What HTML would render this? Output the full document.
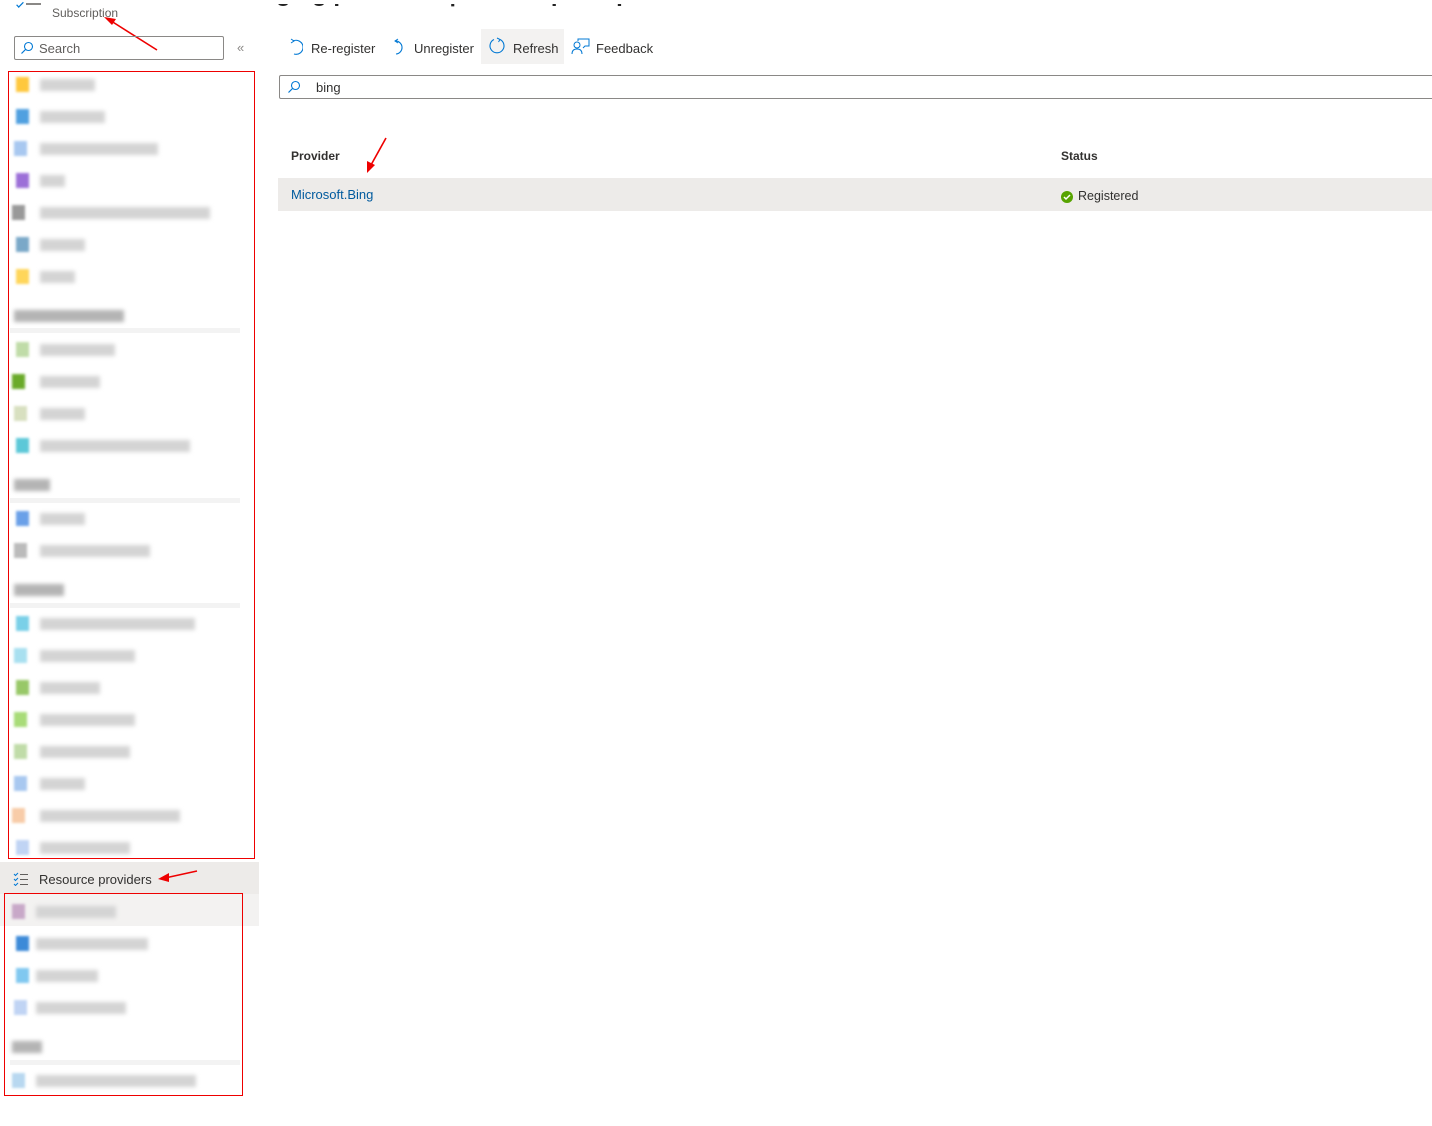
<!DOCTYPE html>
<html><head><meta charset="utf-8"><style>
*{margin:0;padding:0;box-sizing:border-box}
body{width:1432px;height:1126px;background:#fff;position:relative;overflow:hidden;font-family:"Liberation Sans",sans-serif;color:#323130}
.a{position:absolute}
.ic{position:absolute;width:13px;height:15px;filter:blur(1.3px)}
.tx{position:absolute;height:12px;background:#d4d4d4;filter:blur(2px);margin-top:-1px}
.sec{position:absolute;height:12px;background:#b4b4b4;filter:blur(2px);margin-top:-1px}
.ln{position:absolute;left:10px;width:230px;height:5px;background:#f3f3f3}
.t{position:absolute;font-size:13px;white-space:nowrap}
</style></head><body>
<div class="a" style="left:160px;top:-20px;font-size:24px;font-weight:bold;color:#222;white-space:nowrap">Resource g ng  providers | Subscript on provide   a</div>
<div class="a" style="left:0;top:-14px;width:1432px;height:18px;background:#fff"></div>
<div class="a" style="left:14px;top:1px;width:12px;height:6px;border-left:2px solid #0078d4;border-bottom:2px solid #0078d4;transform:rotate(-45deg) scale(.6)"></div>
<div class="a" style="left:26px;top:3px;width:15px;height:2px;background:#8a8886"></div>
<div class="t" style="left:52px;top:6px;font-size:12px;color:#605e5c">Subscription</div>
<svg class="a" style="left:100px;top:15px" width="65" height="40"><line x1="8" y1="4" x2="57" y2="35" stroke="#e00" stroke-width="1.6"/><polygon points="4,2 16,4 12,10" fill="#e00"/></svg>

<div class="a" style="left:14px;top:36px;width:210px;height:24px;border:1px solid #8a8886;border-radius:2px"></div>
<svg class="a" style="left:20px;top:41px" width="14" height="14"><circle cx="8.5" cy="5.5" r="4" fill="none" stroke="#0078d4" stroke-width="1.1"/><line x1="5.5" y1="8.5" x2="1.5" y2="12.5" stroke="#0078d4" stroke-width="1.2"/></svg>
<div class="t" style="left:39px;top:41px;color:#605e5c">Search</div>
<div class="t" style="left:237px;top:40px;color:#8a8886">«</div>

<div class="a" style="left:8px;top:71px;width:247px;height:788px;border:1px solid #e00"></div>

<div class="ic" style="left:16px;top:77px;background:#ffc83d"></div><div class="tx" style="left:40px;top:80px;width:55px"></div>
<div class="ic" style="left:16px;top:109px;background:#50a0e0"></div><div class="tx" style="left:40px;top:112px;width:65px"></div>
<div class="ic" style="left:14px;top:141px;background:#a8c8f0"></div><div class="tx" style="left:40px;top:144px;width:118px"></div>
<div class="ic" style="left:16px;top:173px;background:#9c6fd8"></div><div class="tx" style="left:40px;top:176px;width:25px"></div>
<div class="ic" style="left:12px;top:205px;background:#999"></div><div class="tx" style="left:40px;top:208px;width:170px"></div>
<div class="ic" style="left:16px;top:237px;background:#7aa8c8"></div><div class="tx" style="left:40px;top:240px;width:45px"></div>
<div class="ic" style="left:16px;top:269px;background:#ffd65a"></div><div class="tx" style="left:40px;top:272px;width:35px"></div>
<div class="sec" style="left:14px;top:311px;width:110px"></div><div class="ln" style="top:328px"></div>
<div class="ic" style="left:16px;top:342px;background:#c0dca8"></div><div class="tx" style="left:40px;top:345px;width:75px"></div>
<div class="ic" style="left:12px;top:374px;background:#6aaa2a"></div><div class="tx" style="left:40px;top:377px;width:60px"></div>
<div class="ic" style="left:14px;top:406px;background:#d8e0c0"></div><div class="tx" style="left:40px;top:409px;width:45px"></div>
<div class="ic" style="left:16px;top:438px;background:#5cc8d8"></div><div class="tx" style="left:40px;top:441px;width:150px"></div>
<div class="sec" style="left:14px;top:480px;width:36px"></div><div class="ln" style="top:498px"></div>
<div class="ic" style="left:16px;top:511px;background:#6aa0e8"></div><div class="tx" style="left:40px;top:514px;width:45px"></div>
<div class="ic" style="left:14px;top:543px;background:#bbb"></div><div class="tx" style="left:40px;top:546px;width:110px"></div>
<div class="sec" style="left:14px;top:585px;width:50px"></div><div class="ln" style="top:603px"></div>
<div class="ic" style="left:16px;top:616px;background:#7ad0e8"></div><div class="tx" style="left:40px;top:619px;width:155px"></div>
<div class="ic" style="left:14px;top:648px;background:#a8e0f0"></div><div class="tx" style="left:40px;top:651px;width:95px"></div>
<div class="ic" style="left:16px;top:680px;background:#98c868"></div><div class="tx" style="left:40px;top:683px;width:60px"></div>
<div class="ic" style="left:14px;top:712px;background:#a8dc78"></div><div class="tx" style="left:40px;top:715px;width:95px"></div>
<div class="ic" style="left:14px;top:744px;background:#c0dca8"></div><div class="tx" style="left:40px;top:747px;width:90px"></div>
<div class="ic" style="left:14px;top:776px;background:#a8c8f0"></div><div class="tx" style="left:40px;top:779px;width:45px"></div>
<div class="ic" style="left:12px;top:808px;background:#f8cca8"></div><div class="tx" style="left:40px;top:811px;width:140px"></div>
<div class="ic" style="left:16px;top:840px;background:#c0d4f4"></div><div class="tx" style="left:40px;top:843px;width:90px"></div>

<div class="a" style="left:0;top:862px;width:259px;height:32px;background:#edebe9"></div>
<div class="a" style="left:0;top:894px;width:259px;height:32px;background:#f3f2f1"></div>
<svg class="a" style="left:13px;top:872px" width="16" height="14"><path d="M1 2l1.5 1.5L5 1M1 7l1.5 1.5L5 6M1 12l1.5 1.5L5 11" stroke="#0078d4" fill="none" stroke-width="1"/><path d="M7 2.5h8M7 7.5h8M7 12.5h8" stroke="#605e5c" stroke-width="1"/></svg>
<div class="t" style="left:39px;top:872px">Resource providers</div>
<svg class="a" style="left:155px;top:868px" width="45" height="16"><line x1="42" y1="3" x2="10" y2="10" stroke="#e00" stroke-width="1.6"/><polygon points="3,11 14,5 14,14" fill="#e00"/></svg>

<div class="a" style="left:4px;top:893px;width:239px;height:203px;border:1px solid #e00"></div>
<div class="ic" style="left:12px;top:904px;background:#c8a8c8"></div><div class="tx" style="left:36px;top:907px;width:80px"></div>
<div class="ic" style="left:16px;top:936px;background:#3c8ad8"></div><div class="tx" style="left:36px;top:939px;width:112px"></div>
<div class="ic" style="left:16px;top:968px;background:#80c8f0"></div><div class="tx" style="left:36px;top:971px;width:62px"></div>
<div class="ic" style="left:14px;top:1000px;background:#c0d4f4"></div><div class="tx" style="left:36px;top:1003px;width:90px"></div>
<div class="sec" style="left:12px;top:1042px;width:30px"></div><div class="ln" style="top:1060px"></div>
<div class="ic" style="left:12px;top:1073px;background:#b8d8f0"></div><div class="tx" style="left:36px;top:1076px;width:160px"></div>

<div class="a" style="left:481px;top:29px;width:83px;height:35px;background:#f3f2f1"></div>
<svg class="a" style="left:287px;top:38px" width="16" height="18"><path d="M10 3A7 7 0 1 0 9 16" fill="none" stroke="#0078d4" stroke-width="1.1" transform="scale(-1,1) translate(-16,0)"/><path d="M4 1l3 2-3 2" fill="none" stroke="#0078d4"/></svg>
<div class="t" style="left:311px;top:41px">Re-register</div>
<svg class="a" style="left:390px;top:38px" width="16" height="18"><path d="M5 3A6 6 0 1 1 6 16" fill="none" stroke="#0078d4" stroke-width="1.1"/><path d="M8 1L5 3l3 2" fill="none" stroke="#0078d4"/></svg>
<div class="t" style="left:414px;top:41px">Unregister</div>
<svg class="a" style="left:488px;top:37px" width="18" height="18"><path d="M6 2.5A7 7 0 1 0 12 2.5" fill="none" stroke="#0078d4" stroke-width="1.1"/><path d="M9 1l3 1.5L10.5 5" fill="none" stroke="#0078d4"/></svg>
<div class="t" style="left:513px;top:41px">Refresh</div>
<svg class="a" style="left:571px;top:38px" width="19" height="17"><circle cx="6" cy="7" r="3" fill="none" stroke="#0078d4"/><path d="M1 16c0-4 2.5-5 5-5s5 1 5 5" fill="none" stroke="#0078d4"/><path d="M7 3V1h11v7h-4l-2 2" fill="none" stroke="#0078d4"/></svg>
<div class="t" style="left:596px;top:41px">Feedback</div>

<div class="a" style="left:279px;top:75px;width:1160px;height:24px;border:1px solid #8a8886;border-radius:2px"></div>
<svg class="a" style="left:287px;top:80px" width="14" height="14"><circle cx="8.5" cy="5.5" r="4" fill="none" stroke="#0078d4" stroke-width="1.1"/><line x1="5.5" y1="8.5" x2="1.5" y2="12.5" stroke="#0078d4" stroke-width="1.2"/></svg>
<div class="t" style="left:316px;top:80px">bing</div>

<div class="t" style="left:291px;top:149px;font-size:12px;font-weight:bold;color:#323130">Provider</div>
<div class="t" style="left:1061px;top:149px;font-size:12px;font-weight:bold;color:#323130">Status</div>
<svg class="a" style="left:362px;top:135px" width="28" height="42"><line x1="24" y1="3" x2="9" y2="30" stroke="#e00" stroke-width="1.6"/><polygon points="5,38 5,26 13,30" fill="#e00"/></svg>
<div class="a" style="left:278px;top:178px;width:1160px;height:33px;background:#edebe9"></div>
<div class="t" style="left:291px;top:187px;color:#005a9e">Microsoft.Bing</div>
<svg class="a" style="left:1061px;top:191px" width="12" height="12"><circle cx="6" cy="6" r="6" fill="#57a300"/><path d="M3 6l2 2 4-4" fill="none" stroke="#fff" stroke-width="1.5"/></svg>
<div class="t" style="left:1078px;top:189px;font-size:12.5px">Registered</div>
</body></html>
